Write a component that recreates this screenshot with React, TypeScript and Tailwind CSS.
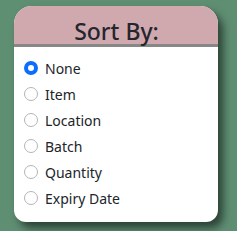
import { useState } from 'react';

const options = ['None', 'Item', 'Location', 'Batch', 'Quantity', 'Expiry Date'];

export default function App() {
  const [sortBy, setSortBy] = useState('None');

  return (
    <div className="w-[237px] h-[231px] bg-[#5f8f73] pt-[6px] pl-[14px]" style={{ fontFamily: '"Noto Sans", "Open Sans", sans-serif' }}>
      <div className="w-[204px] h-[216px] bg-white rounded-t-[18px] rounded-b-[12px] overflow-hidden shadow-[5px_6px_8px_rgba(0,0,0,0.55)] flex flex-col">
        <div className="h-[41px] bg-[#cfa9ae] border-b-[3px] border-[#878787] flex items-end justify-center">
          <h2 className="text-[23px] leading-[26px] font-medium text-[#25252f] pl-[1px]">Sort By:</h2>
        </div>
        <div className="flex flex-col pt-[8px] pl-[10px]">
          {options.map(opt => (
            <label key={opt} className="h-[26px] flex items-center gap-[7px] text-[14px] text-[#212529] cursor-pointer">
              <input
                type="radio"
                name="sort"
                checked={sortBy === opt}
                onChange={() => setSortBy(opt)}
                className="m-0 w-[14px] h-[14px] appearance-none rounded-full border border-[#b5b5b5] bg-white checked:border-[4px] checked:border-[#0d6efd]"
              />
              {opt}
            </label>
          ))}
        </div>
      </div>
    </div>
  );
}
